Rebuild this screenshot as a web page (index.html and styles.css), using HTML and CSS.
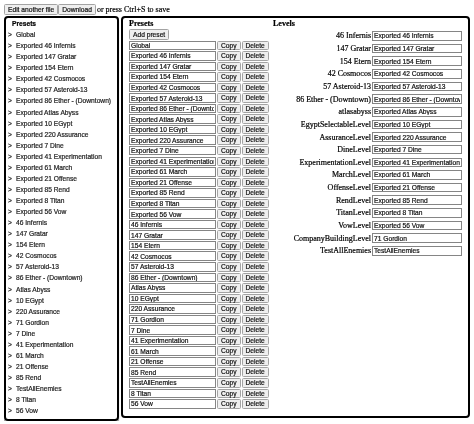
FILE: index.html
```html
<!doctype html>
<html lang="en">
<head>
    <meta charset="UTF-8">
    <title>Level presets</title>
    <link rel="stylesheet" href="styles.css">
</head>
<body>
    <div class="toolbar">
        <button>Edit another file</button><button>Download</button>
        <span class="hint">or press Ctrl+S to save</span>
    </div>
    <div class="panels">
        <!--tree of presets-->
        <ul class="tree">
            <li class="head">Presets</li>
            <li>Global</li>
            <li>Exported 46 Infernis</li>
            <li>Exported 147 Gratar</li>
            <li>Exported 154 Etern</li>
            <li>Exported 42 Cosmocos</li>
            <li>Exported 57 Asteroid-13</li>
            <li>Exported 86 Ether - (Downtown)</li>
            <li>Exported Atlas Abyss</li>
            <li>Exported 10 EGypt</li>
            <li>Exported 220 Assurance</li>
            <li>Exported 7 Dine</li>
            <li>Exported 41 Experimentation</li>
            <li>Exported 61 March</li>
            <li>Exported 21 Offense</li>
            <li>Exported 85 Rend</li>
            <li>Exported 8 Titan</li>
            <li>Exported 56 Vow</li>
            <li>46 Infernis</li>
            <li>147 Gratar</li>
            <li>154 Etern</li>
            <li>42 Cosmocos</li>
            <li>57 Asteroid-13</li>
            <li>86 Ether - (Downtown)</li>
            <li>Atlas Abyss</li>
            <li>10 EGypt</li>
            <li>220 Assurance</li>
            <li>71 Gordion</li>
            <li>7 Dine</li>
            <li>41 Experimentation</li>
            <li>61 March</li>
            <li>21 Offense</li>
            <li>85 Rend</li>
            <li>TestAllEnemies</li>
            <li>8 Titan</li>
            <li>56 Vow</li>
        </ul>

        <div class="editor">
            <div class="presets">
                <h2>Presets</h2>
                <button class="add">Add preset</button>
                <div class="row"><input value="Global"><button>Copy</button><button>Delete</button></div>
                <div class="row"><input value="Exported 46 Infernis"><button>Copy</button><button>Delete</button></div>
                <div class="row"><input value="Exported 147 Gratar"><button>Copy</button><button>Delete</button></div>
                <div class="row"><input value="Exported 154 Etern"><button>Copy</button><button>Delete</button></div>
                <div class="row"><input value="Exported 42 Cosmocos"><button>Copy</button><button>Delete</button></div>
                <div class="row"><input value="Exported 57 Asteroid-13"><button>Copy</button><button>Delete</button></div>
                <div class="row"><input value="Exported 86 Ether - (Downtown)"><button>Copy</button><button>Delete</button></div>
                <div class="row"><input value="Exported Atlas Abyss"><button>Copy</button><button>Delete</button></div>
                <div class="row"><input value="Exported 10 EGypt"><button>Copy</button><button>Delete</button></div>
                <div class="row"><input value="Exported 220 Assurance"><button>Copy</button><button>Delete</button></div>
                <div class="row"><input value="Exported 7 Dine"><button>Copy</button><button>Delete</button></div>
                <div class="row"><input value="Exported 41 Experimentation"><button>Copy</button><button>Delete</button></div>
                <div class="row"><input value="Exported 61 March"><button>Copy</button><button>Delete</button></div>
                <div class="row"><input value="Exported 21 Offense"><button>Copy</button><button>Delete</button></div>
                <div class="row"><input value="Exported 85 Rend"><button>Copy</button><button>Delete</button></div>
                <div class="row"><input value="Exported 8 Titan"><button>Copy</button><button>Delete</button></div>
                <div class="row"><input value="Exported 56 Vow"><button>Copy</button><button>Delete</button></div>
                <div class="row"><input value="46 Infernis"><button>Copy</button><button>Delete</button></div>
                <div class="row"><input value="147 Gratar"><button>Copy</button><button>Delete</button></div>
                <div class="row"><input value="154 Etern"><button>Copy</button><button>Delete</button></div>
                <div class="row"><input value="42 Cosmocos"><button>Copy</button><button>Delete</button></div>
                <div class="row"><input value="57 Asteroid-13"><button>Copy</button><button>Delete</button></div>
                <div class="row"><input value="86 Ether - (Downtown)"><button>Copy</button><button>Delete</button></div>
                <div class="row"><input value="Atlas Abyss"><button>Copy</button><button>Delete</button></div>
                <div class="row"><input value="10 EGypt"><button>Copy</button><button>Delete</button></div>
                <div class="row"><input value="220 Assurance"><button>Copy</button><button>Delete</button></div>
                <div class="row"><input value="71 Gordion"><button>Copy</button><button>Delete</button></div>
                <div class="row"><input value="7 Dine"><button>Copy</button><button>Delete</button></div>
                <div class="row"><input value="41 Experimentation"><button>Copy</button><button>Delete</button></div>
                <div class="row"><input value="61 March"><button>Copy</button><button>Delete</button></div>
                <div class="row"><input value="21 Offense"><button>Copy</button><button>Delete</button></div>
                <div class="row"><input value="85 Rend"><button>Copy</button><button>Delete</button></div>
                <div class="row"><input value="TestAllEnemies"><button>Copy</button><button>Delete</button></div>
                <div class="row"><input value="8 Titan"><button>Copy</button><button>Delete</button></div>
                <div class="row"><input value="56 Vow"><button>Copy</button><button>Delete</button></div>
            </div>

            <div class="levels">
                <h2>Levels</h2>
                <div class="grid">
                    <label>46 Infernis</label><input value="Exported 46 Infernis">
                    <label>147 Gratar</label><input value="Exported 147 Gratar">
                    <label>154 Etern</label><input value="Exported 154 Etern">
                    <label>42 Cosmocos</label><input value="Exported 42 Cosmocos">
                    <label>57 Asteroid-13</label><input value="Exported 57 Asteroid-13">
                    <label>86 Ether - (Downtown)</label><input value="Exported 86 Ether - (Downtown)">
                    <label>atlasabyss</label><input value="Exported Atlas Abyss">
                    <label>EgyptSelectableLevel</label><input value="Exported 10 EGypt">
                    <label>AssuranceLevel</label><input value="Exported 220 Assurance">
                    <label>DineLevel</label><input value="Exported 7 Dine">
                    <label>ExperimentationLevel</label><input value="Exported 41 Experimentation">
                    <label>MarchLevel</label><input value="Exported 61 March">
                    <label>OffenseLevel</label><input value="Exported 21 Offense">
                    <label>RendLevel</label><input value="Exported 85 Rend">
                    <label>TitanLevel</label><input value="Exported 8 Titan">
                    <label>VowLevel</label><input value="Exported 56 Vow">
                    <label>CompanyBuildingLevel</label><input value="71 Gordion">
                    <label>TestAllEnemies</label><input value="TestAllEnemies">
                </div>
            </div>
        </div>
    </div>
</body>
</html>
```

FILE: styles.css
```css
*{
    margin: 0;
    padding: 0;
    box-sizing: border-box;
}
body{
    margin: 4px;
    font-family: "Liberation Serif", "Times New Roman", serif;
    font-size: 8px;
    color: #000;
    -webkit-font-smoothing: antialiased;
    -webkit-text-stroke: 0.2px currentColor;
    will-change: transform;
}
button,input{
    font-family: "Liberation Sans", Arial, sans-serif;
    font-size: 6.67px;
    color: #111;
    -webkit-text-stroke: 0.2px currentColor;
}
button{
    height: 10px;
    padding: 0 3px;
    line-height: 8px;
    background: #efefef;
    border: 1px solid #a3a3a3;
    border-radius: 1.5px;
}
input{
    height: 9.5px;
    padding: 0 1px;
    background: #fff;
    border: 1px solid #858585;
    outline: none;
}

.toolbar{
    display: flex;
    align-items: center;
    height: 11px;
}
.toolbar button{
    height: 11px;
}
.hint{
    margin-left: 1px;
}

.panels{
    display: flex;
    align-items: flex-start;
    gap: 2px;
    margin-top: 1px;
}

/* left tree */
.tree{
    width: 116px;
    padding: 0 2px 3px;
    list-style: none;
    font-family: "Liberation Sans", Arial, sans-serif;
    font-size: 6.67px;
    line-height: 11.06px;
    color: #222;
    border: 2px solid #000;
    border-radius: 4px;
    box-shadow: 0 3px 1px #9a9a9a;
}
.tree li{
    white-space: nowrap;
}
.tree li::before{
    content: ">";
    display: inline-block;
    width: 8px;
}
.tree li.head{
    padding-left: 4px;
    font-weight: bold;
    color: #000;
}
.tree li.head::before{
    display: none;
}

/* right editor */
.editor{
    display: flex;
    gap: 5px;
    width: 350px;
    padding: 0 6px 7px;
    border: 2px solid #000;
    border-radius: 4px;
}
h2{
    font-size: 8px;
    line-height: 11px;
    font-weight: bold;
}
.presets{
    width: 139px;
}
.presets .add{
    display: block;
    height: 11px;
}
.row{
    display: flex;
    align-items: center;
    height: 10.55px;
}
.row input{
    width: 87px;
    margin-right: 1px;
}
.row button{
    height: 9.5px;
    margin-right: 1px;
}

.levels{
    flex: 1;
}
.grid{
    display: grid;
    grid-template-columns: 98px 90px;
    grid-auto-rows: 12.65px;
    column-gap: 1px;
    align-items: center;
    margin-top: 0.6px;
}
.grid label{
    text-align: right;
    white-space: nowrap;
}
.grid input{
    width: 90px;
}
```
